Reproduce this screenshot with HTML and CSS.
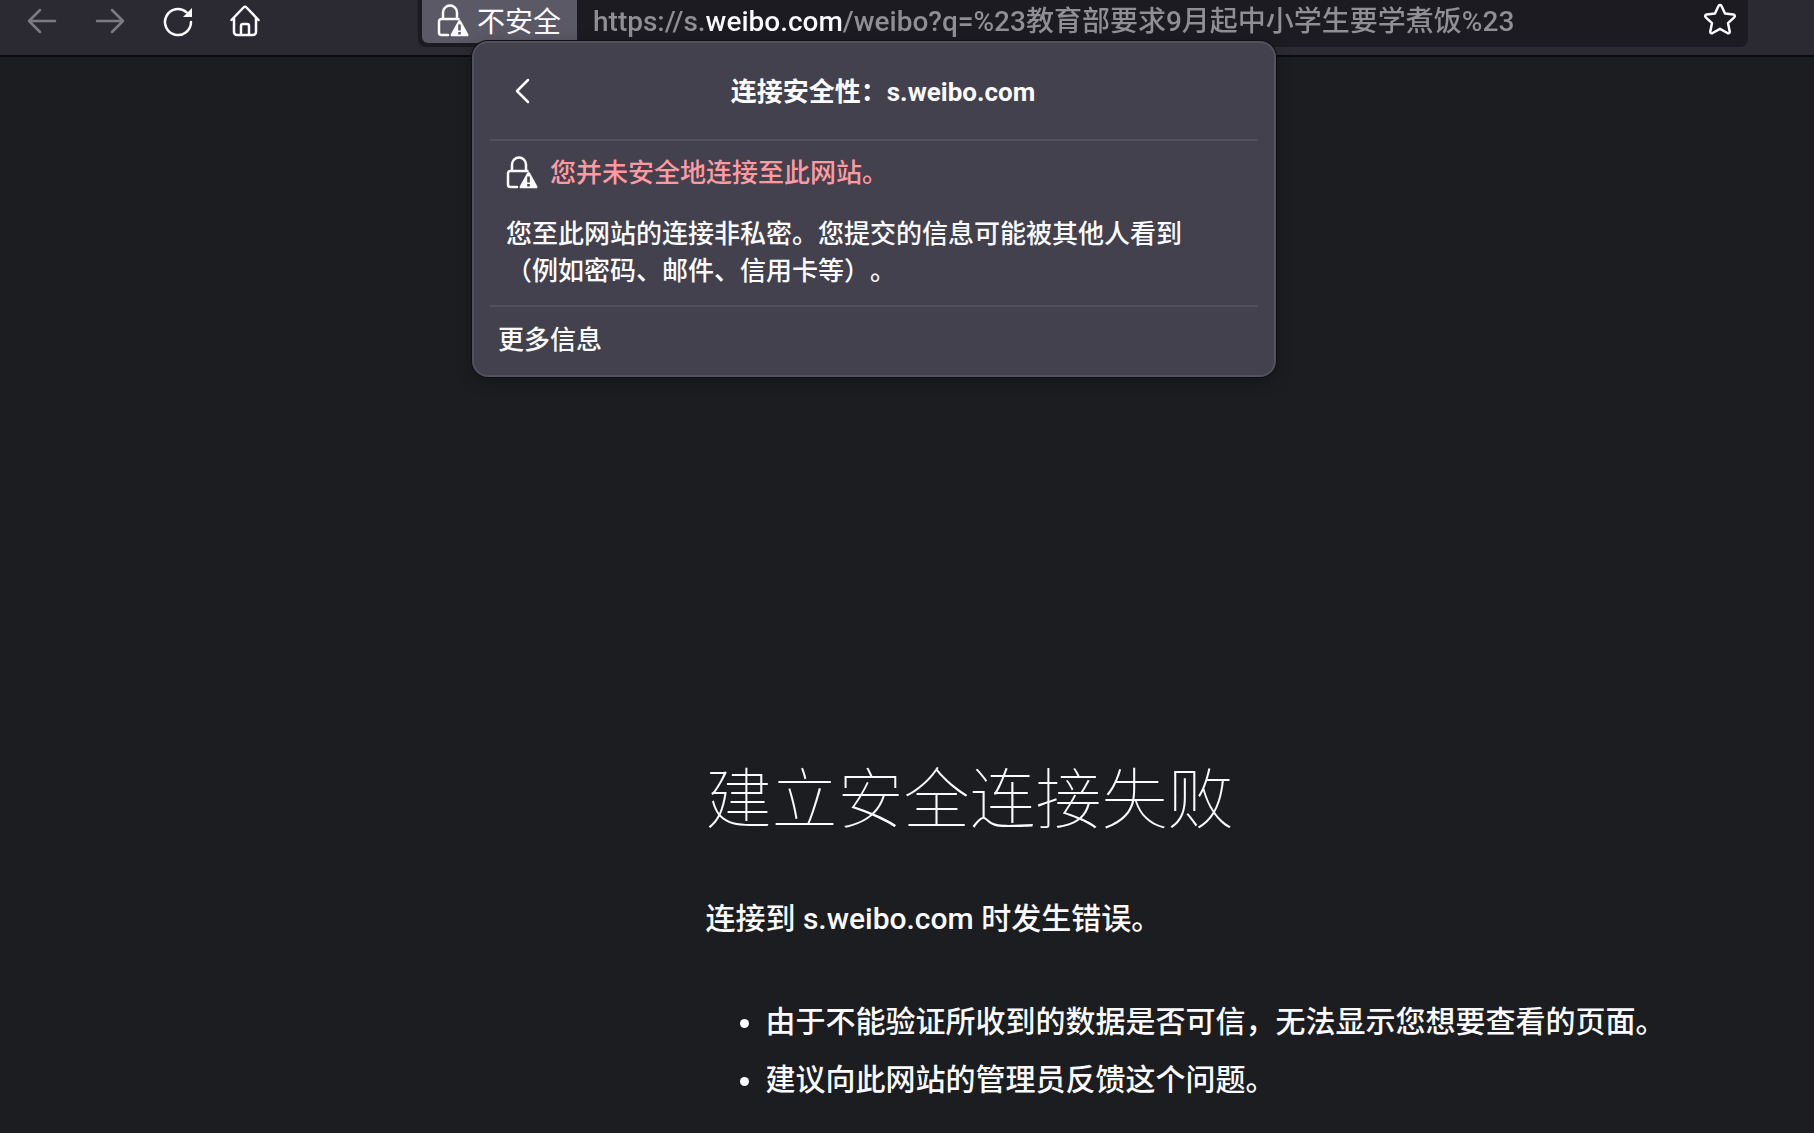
FILE: index.html
```
<!DOCTYPE html>
<html lang="zh-CN">
	<head>
		<meta charset="utf-8">
		<title>建立安全连接失败</title>
		<link rel="stylesheet" href="styles.css">
	</head>
	<body>

		<header class="toolbar">
			<nav class="nav-buttons">
				<button class="nav-button" aria-label="后退" disabled>
					<svg width="32" height="32" viewBox="0 0 32 32"><path d="M29 16H3M14 5L3 16l11 11"/></svg>
				</button>
				<button class="nav-button" aria-label="前进" disabled>
					<svg width="32" height="32" viewBox="0 0 32 32"><path d="M3 16h26M18 5l11 11-11 11"/></svg>
				</button>
				<button class="nav-button" aria-label="刷新">
					<svg width="32" height="32" viewBox="0 0 32 32"><path d="M29 17a13 13 0 1 1-4.500-9.800"/><path class="solid" d="M30 3v9H21z"/></svg>
				</button>
				<button class="nav-button" aria-label="主页">
					<svg width="32" height="32" viewBox="0 0 32 32"><path d="M1.500 15L13.500 2.500a2 2 0 0 1 3 0L28.500 15M4 13v14a3 3 0 0 0 3 3h16a3 3 0 0 0 3-3V13M11 30v-9a2 2 0 0 1 2-2h4a2 2 0 0 1 2 2v9"/></svg>
				</button>
			</nav>

			<div class="urlbar">
				<button class="identity">
					<svg width="32" height="34" viewBox="0 0 32 34"><use href="#lock-warning"/></svg>
					<span>不安全</span>
				</button>
				<input class="url" type="text" aria-label="网址" value="https://s.weibo.com/weibo?q=%23教育部要求9月起中小学生要学煮饭%23">
				<button class="bookmark" aria-label="添加书签">
					<svg width="32" height="32" viewBox="0 0 32 32"><path d="M14.600 2.800a1.600 1.600 0 0 1 2.800 0l3.600 7.800 8.400 1a1.500 1.500 0 0 1 .8 2.700L24 20.100l1.700 8.300a1.500 1.500 0 0 1-2.300 1.600L16 25.800 8.600 30a1.500 1.500 0 0 1-2.300-1.600L8 20.100l-6.200-5.800a1.500 1.500 0 0 1 .8-2.700l8.400-1z"/></svg>
				</button>

				<!-- site identity panel -->
				<section class="panel">
					<div class="panel-header">
						<button class="panel-back" aria-label="返回">
							<svg width="16" height="28" viewBox="0 0 16 28"><path d="M14 3L3 14l11 11"/></svg>
						</button>
						<h2>连接安全性：s.weibo.com</h2>
					</div>
					<div class="panel-body">
						<div class="status">
							<svg width="32" height="34" viewBox="0 0 32 34"><use href="#lock-warning"/></svg>
							<span>您并未安全地连接至此网站。</span>
						</div>
						<p>您至此网站的连接非私密。您提交的信息可能被其他人看到（例如密码、邮件、信用卡等）。</p>
					</div>
					<button class="more">更多信息</button>
				</section>
			</div>
		</header>

		<main class="page">
			<div class="error">
				<h1>建立安全连接失败</h1>
				<p>连接到 s.weibo.com 时发生错误。</p>
				<ul>
					<li>由于不能验证所收到的数据是否可信，无法显示您想要查看的页面。</li>
					<li>建议向此网站的管理员反馈这个问题。</li>
				</ul>
			</div>
		</main>

		<svg class="defs" width="0" height="0">
			<symbol id="lock-warning" viewBox="0 0 32 34">
				<path d="M6 16V9.500a7 7 0 0 1 14 0V16M11 32H4.500a2.500 2.500 0 0 1-2.500-2.500V18.500A2.500 2.500 0 0 1 4.500 16h17"/>
				<path class="solid" fill-rule="evenodd" d="M21.200 17.800a1.500 1.500 0 0 1 2.700 0l7.400 13.500a1.300 1.300 0 0 1-1.200 2H15a1.300 1.300 0 0 1-1.200-2zM21.200 21.500v6h2.600v-6zM21.200 29v2.400h2.600V29z"/>
			</symbol>
		</svg>

	</body>
</html>
```
FILE: styles.css
```
* {
	box-sizing: border-box;
}

body {
	margin: 0;
	background: #1c1d21;
	color: #fbfbfe;
	font-family: Roboto, "Noto Sans CJK SC", sans-serif;
	font-size: 26px;
	text-spacing-trim: space-all;
}

button {
	display: flex;
	align-items: center;
	padding: 0;
	border: 0;
	background: none;
	color: inherit;
	font: inherit;
}

svg {
	flex: none;
	fill: none;
	stroke: currentColor;
	stroke-width: 2.5;
	stroke-linecap: round;
	stroke-linejoin: round;
}

.solid {
	fill: currentColor;
	stroke: none;
}

.defs {
	position: absolute;
}

/* toolbar */
.toolbar {
	display: flex;
	height: 57px;
	padding: 0 66px 0 8px;
	background: #2b2a33;
	border-bottom: 2px solid #0c0c10;
}

.nav-buttons {
	display: flex;
	height: 41px;
	margin-right: 138px;
}

.nav-button {
	width: 68px;
	justify-content: center;
}

.nav-button:disabled {
	color: #7c7a84;
}

.urlbar {
	position: relative;
	display: flex;
	flex: 1;
	height: 47px;
	padding: 0 12px 4px 4px;
	background: #1c1b22;
	border-radius: 0 0 8px 8px;
}

.identity {
	gap: 8px;
	padding: 0 16px 4px 15px;
	background: #5b5966;
	border-radius: 0 0 0 6px;
	font-size: 28px;
	white-space: nowrap;
}

/* the host part of the address is brighter than the rest */
.url {
	flex: 1;
	min-width: 0;
	height: 37px;
	padding: 0 16px;
	border: 0;
	outline: 0;
	background: linear-gradient(90deg, #8f8f94 128px, #fbfbfe 128px, #fbfbfe 265px, #8f8f94 265px);
	-webkit-background-clip: text;
	background-clip: text;
	-webkit-text-fill-color: transparent;
	color: #8f8f94;
	font-family: inherit;
	font-size: 28px;
	font-weight: 500;
}

.bookmark {
	height: 38px;
}

/* panel */
.panel {
	position: absolute;
	top: 41px;
	left: 54px;
	width: 804px;
	padding: 0 16px;
	background: #42414d;
	border: 2px solid #52525e;
	border-radius: 16px;
	box-shadow: 0 0 0 1px #101014, 0 4px 16px rgba(0, 0, 0, 0.3);
}

.panel-header {
	display: flex;
	align-items: center;
	height: 98px;
	border-bottom: 2px solid #52525e;
}

.panel-back {
	padding: 0 24px;
}

.panel-header h2 {
	flex: 1;
	margin: 0 46px 0 0;
	padding-bottom: 4px;
	font-size: 26px;
	font-weight: 700;
	text-align: center;
}

.panel-body {
	padding: 14px 48px 15px 16px;
	font-weight: 500;
	border-bottom: 2px solid #52525e;
}

.status {
	display: flex;
	align-items: center;
	gap: 12px;
	height: 34px;
}

.status span {
	padding-bottom: 4px;
	color: #ff9aa2;
}

.panel-body p {
	margin: 27px 0 0;
	line-height: 37px;
}

.more {
	width: 100%;
	height: 68px;
	padding: 0 8px 8px;
	font-weight: 500;
}

/* error page */
.page {
	display: grid;
	grid-template-columns: 7fr 11fr;
}

.error {
	grid-column: 2;
	padding: 704px 0 0;
	font-size: 30px;
	font-weight: 500;
}

.error h1 {
	margin: 0;
	font-size: 66px;
	font-weight: 100;
	line-height: 80px;
}

.error p {
	margin: 57px 0 0;
	line-height: 42px;
}

.error ul {
	margin: 53px 0 0;
	padding: 0 0 25px 60px;
}

.error li {
	line-height: 58px;
}
```
